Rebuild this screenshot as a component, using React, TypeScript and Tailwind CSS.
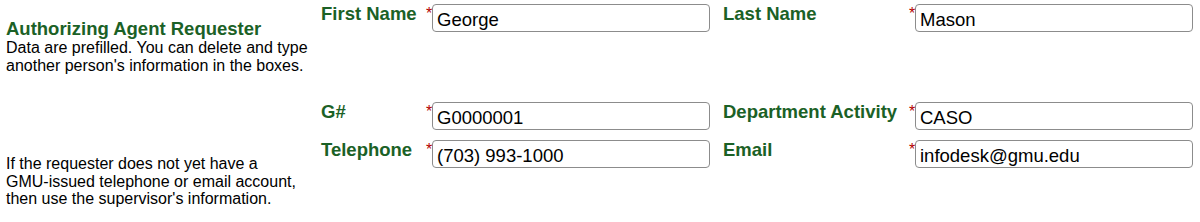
type FieldProps = {
  label: string;
  value: string;
  labelWidth: string;
};

const Field = ({ label, value, labelWidth }: FieldProps) => {
  return (
    <div className="flex items-start pt-[4px]">
      <label
        className={`${labelWidth} -mt-[1px] text-[18.5px] leading-[21px] font-bold text-[#1b6126]`}
      >
        {label}
      </label>
      <span className="w-[6px] mt-[2px] text-right text-[16px] leading-none text-[#b30000]">
        *
      </span>
      <input
        type="text"
        defaultValue={value}
        className="w-[278px] h-[28px] rounded-[4px] border border-[#8c8c8c] bg-white pl-[4px] pr-[4px] pt-[3px] pb-0 text-[18.5px] text-black outline-none"
      />
    </div>
  );
};

const App = () => {
  return (
    <div
      className="w-[1200px] h-[222px] bg-white pl-[6px] text-black"
      style={{ fontFamily: '"Liberation Sans", Arial, sans-serif' }}
    >
      <div className="grid grid-cols-[302px_389px_470px] grid-rows-[98px_38px_auto] gap-x-[13px]">
        <div className="pt-[18px]">
          <h2 className="text-[18.5px] leading-[21px] font-bold text-[#1b6126]">
            Authorizing Agent Requester
          </h2>
          <p className="text-[16px] leading-[17.5px] whitespace-nowrap">
            Data are prefilled. You can delete and type
            <br />
            another person's information in the boxes.
          </p>
        </div>
        <Field label="First Name" value="George" labelWidth="w-[105px]" />
        <Field label="Last Name" value="Mason" labelWidth="w-[186px]" />

        <div className="row-span-2 pt-[57px]">
          <p className="text-[16px] leading-[17.5px] whitespace-nowrap">
            If the requester does not yet have a
            <br />
            GMU-issued telephone or email account,
            <br />
            then use the supervisor's information.
          </p>
        </div>
        <Field label="G#" value="G0000001" labelWidth="w-[105px]" />
        <Field
          label="Department Activity"
          value="CASO"
          labelWidth="w-[186px]"
        />

        <Field label="Telephone" value="(703) 993-1000" labelWidth="w-[105px]" />
        <Field label="Email" value="infodesk@gmu.edu" labelWidth="w-[186px]" />
      </div>
    </div>
  );
};

export default App;
